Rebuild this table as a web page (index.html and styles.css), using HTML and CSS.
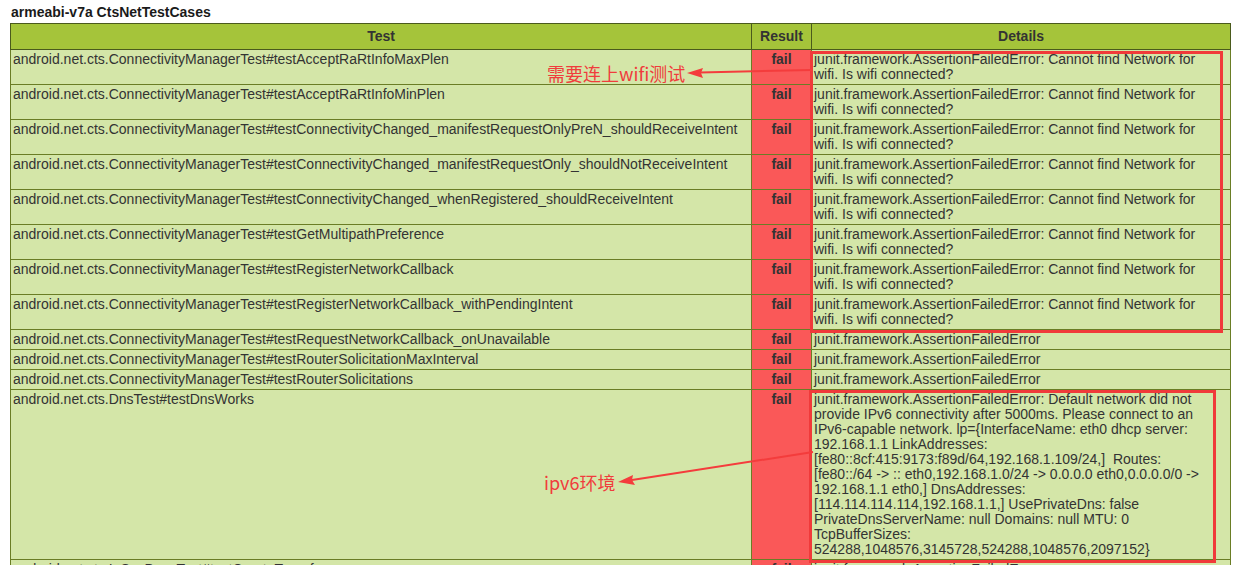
FILE: index.html
```html
<!DOCTYPE html>
<html>
<head>
<meta charset="utf-8">
<link rel="stylesheet" href="styles.css">
</head>
<body>
<div class="page">
  <h4 class="title">armeabi-v7a CtsNetTestCases</h4>
  <table class="results">
    <colgroup><col class="c-test"><col class="c-result"><col class="c-details"></colgroup>
    <thead>
      <tr><th>Test</th><th>Result</th><th>Details</th></tr>
    </thead>
    <tbody>
      <tr><td>android.net.cts.ConnectivityManagerTest#testAcceptRaRtInfoMaxPlen</td><td class="fail">fail</td><td>junit.framework.AssertionFailedError: Cannot find Network for<br>wifi. Is wifi connected?</td></tr>
      <tr><td>android.net.cts.ConnectivityManagerTest#testAcceptRaRtInfoMinPlen</td><td class="fail">fail</td><td>junit.framework.AssertionFailedError: Cannot find Network for<br>wifi. Is wifi connected?</td></tr>
      <tr><td>android.net.cts.ConnectivityManagerTest#testConnectivityChanged_manifestRequestOnlyPreN_shouldReceiveIntent</td><td class="fail">fail</td><td>junit.framework.AssertionFailedError: Cannot find Network for<br>wifi. Is wifi connected?</td></tr>
      <tr><td>android.net.cts.ConnectivityManagerTest#testConnectivityChanged_manifestRequestOnly_shouldNotReceiveIntent</td><td class="fail">fail</td><td>junit.framework.AssertionFailedError: Cannot find Network for<br>wifi. Is wifi connected?</td></tr>
      <tr><td>android.net.cts.ConnectivityManagerTest#testConnectivityChanged_whenRegistered_shouldReceiveIntent</td><td class="fail">fail</td><td>junit.framework.AssertionFailedError: Cannot find Network for<br>wifi. Is wifi connected?</td></tr>
      <tr><td>android.net.cts.ConnectivityManagerTest#testGetMultipathPreference</td><td class="fail">fail</td><td>junit.framework.AssertionFailedError: Cannot find Network for<br>wifi. Is wifi connected?</td></tr>
      <tr><td>android.net.cts.ConnectivityManagerTest#testRegisterNetworkCallback</td><td class="fail">fail</td><td>junit.framework.AssertionFailedError: Cannot find Network for<br>wifi. Is wifi connected?</td></tr>
      <tr><td>android.net.cts.ConnectivityManagerTest#testRegisterNetworkCallback_withPendingIntent</td><td class="fail">fail</td><td>junit.framework.AssertionFailedError: Cannot find Network for<br>wifi. Is wifi connected?</td></tr>
      <tr><td>android.net.cts.ConnectivityManagerTest#testRequestNetworkCallback_onUnavailable</td><td class="fail">fail</td><td>junit.framework.AssertionFailedError</td></tr>
      <tr><td>android.net.cts.ConnectivityManagerTest#testRouterSolicitationMaxInterval</td><td class="fail">fail</td><td>junit.framework.AssertionFailedError</td></tr>
      <tr><td>android.net.cts.ConnectivityManagerTest#testRouterSolicitations</td><td class="fail">fail</td><td>junit.framework.AssertionFailedError</td></tr>
      <tr><td>android.net.cts.DnsTest#testDnsWorks</td><td class="fail">fail</td><td>junit.framework.AssertionFailedError: Default network did not<br>provide IPv6 connectivity after 5000ms. Please connect to an<br>IPv6-capable network. lp={InterfaceName: eth0 dhcp server:<br>192.168.1.1 LinkAddresses:<br>[fe80::8cf:415:9173:f89d/64,192.168.1.109/24,]&nbsp; Routes:<br>[fe80::/64 -&gt; :: eth0,192.168.1.0/24 -&gt; 0.0.0.0 eth0,0.0.0.0/0 -&gt;<br>192.168.1.1 eth0,] DnsAddresses:<br>[114.114.114.114,192.168.1.1,] UsePrivateDns: false<br>PrivateDnsServerName: null Domains: null MTU: 0<br>TcpBufferSizes:<br>524288,1048576,3145728,524288,1048576,2097152}</td></tr>
      <tr><td>android.net.cts.IpSecBaseTest#testCreateTransform</td><td class="fail">fail</td><td>junit.framework.AssertionFailedError</td></tr>
    </tbody>
  </table>

  <div class="note note-wifi">需要连上wifi测试</div>
  <div class="note note-ipv6">ipv6环境</div>
  <div class="mark mark-wifi"></div>
  <div class="mark mark-ipv6"></div>
  <svg class="arrows" width="1257" height="565" viewBox="0 0 1257 565">
    <line x1="812" y1="70" x2="700" y2="72.5" stroke="#f43c3c" stroke-width="2"/>
    <polygon points="687,73 703,68 701,73 703,78" fill="#f43c3c"/>
    <line x1="813" y1="452" x2="632" y2="480" stroke="#f43c3c" stroke-width="2"/>
    <polygon points="618,482 633,475 632,480 635,485" fill="#f43c3c"/>
  </svg>
</div>
</body>
</html>
```

FILE: styles.css
```css
html, body {
  margin: 0;
  padding: 0;
  background: #ffffff;
}

.page {
  position: relative;
  width: 1257px;
  height: 565px;
  overflow: hidden;
  padding: 4px 0 0 10px;
  box-sizing: border-box;
  font-family: "Liberation Sans", Arial, sans-serif;
  color: #333333;
}

.title {
  margin: 0 0 3px 1px;
  font-size: 14px;
  line-height: 16px;
  font-weight: bold;
  color: #1a1a1a;
}

.results {
  border-collapse: collapse;
  table-layout: fixed;
  width: 1220px;
  font-size: 14px;
  line-height: 15px;
}

.c-test { width: 741px; }
.c-result { width: 60px; }
.c-details { width: 419px; }

.results th {
  background: #a5c43a;
  border: 1px solid #4a5a1c;
  padding: 5px 2px;
  font-weight: bold;
  text-align: center;
  color: #333333;
}

.results td {
  background: #d4e6a8;
  border: 1px solid #6a7d25;
  padding: 2px;
  vertical-align: top;
  text-align: left;
  white-space: nowrap;
  overflow: hidden;
}

.results td.fail {
  background: #fa5858;
  font-weight: bold;
  text-align: center;
  color: #333333;
}

.note {
  position: absolute;
  font-family: "Noto Sans CJK SC", "Liberation Sans", sans-serif;
  font-size: 18px;
  line-height: 20px;
  color: #f03c3c;
  white-space: nowrap;
}

.note-wifi { left: 547px; top: 63px; }
.note-ipv6 { left: 544px; top: 472px; }

.mark {
  position: absolute;
  border: 3px solid #f03a3a;
  box-sizing: border-box;
}

.mark-wifi { left: 810px; top: 51px; width: 413px; height: 282px; }
.mark-ipv6 { left: 809px; top: 390px; width: 407px; height: 173px; }

.arrows {
  position: absolute;
  left: 0;
  top: 0;
  pointer-events: none;
}
```
